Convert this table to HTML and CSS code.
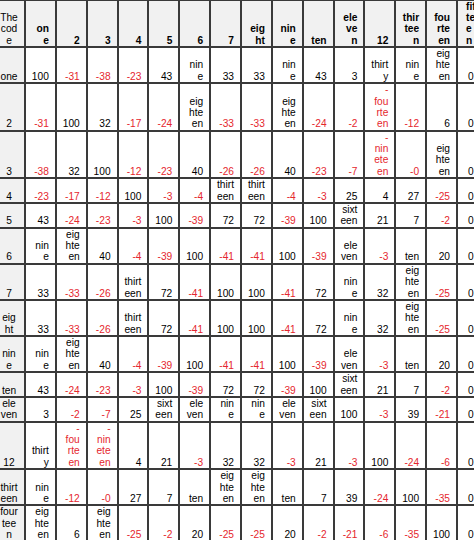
FILE: index.html
```html
<!DOCTYPE html>
<html>
<head>
<meta charset="utf-8">
<link rel="stylesheet" href="styles.css">
</head>
<body>
<div class="frame">
<table class="matrix">
<colgroup>
<col class="c-label">
<col class="c-data"><col class="c-data"><col class="c-data"><col class="c-data"><col class="c-data"><col class="c-data"><col class="c-data">
<col class="c-data"><col class="c-data"><col class="c-data"><col class="c-data"><col class="c-data"><col class="c-data"><col class="c-data">
<col class="c-last">
</colgroup>
<thead>
<tr>
<th class="label corner">The code</th>
<th>one</th><th>2</th><th>3</th><th>4</th><th>5</th><th>6</th><th>7</th>
<th>eight</th><th>nine</th><th>ten</th><th>eleven</th><th>12</th><th>thirteen</th><th>fourteen</th>
<th class="last">fifteen</th>
</tr>
</thead>
<tbody>
<tr><th class="label">one</th><td>100</td><td class="neg">-31</td><td class="neg">-38</td><td class="neg">-23</td><td>43</td><td>nine</td><td>33</td><td>33</td><td>nine</td><td>43</td><td>3</td><td>thirty</td><td>nine</td><td>eighteen</td><td class="last">0</td></tr>
<tr><th class="label">2</th><td class="neg">-31</td><td>100</td><td>32</td><td class="neg">-17</td><td class="neg">-24</td><td>eighteen</td><td class="neg">-33</td><td class="neg">-33</td><td>eighteen</td><td class="neg">-24</td><td class="neg">-2</td><td class="neg">-fourteen</td><td class="neg">-12</td><td>6</td><td class="last">0</td></tr>
<tr><th class="label">3</th><td class="neg">-38</td><td>32</td><td>100</td><td class="neg">-12</td><td class="neg">-23</td><td>40</td><td class="neg">-26</td><td class="neg">-26</td><td>40</td><td class="neg">-23</td><td class="neg">-7</td><td class="neg">-nineteen</td><td class="neg">-0</td><td>eighteen</td><td class="last">0</td></tr>
<tr><th class="label">4</th><td class="neg">-23</td><td class="neg">-17</td><td class="neg">-12</td><td>100</td><td class="neg">-3</td><td class="neg">-4</td><td>thirteen</td><td>thirteen</td><td class="neg">-4</td><td class="neg">-3</td><td>25</td><td>4</td><td>27</td><td class="neg">-25</td><td class="last">0</td></tr>
<tr><th class="label">5</th><td>43</td><td class="neg">-24</td><td class="neg">-23</td><td class="neg">-3</td><td>100</td><td class="neg">-39</td><td>72</td><td>72</td><td class="neg">-39</td><td>100</td><td>sixteen</td><td>21</td><td>7</td><td class="neg">-2</td><td class="last">0</td></tr>
<tr><th class="label">6</th><td>nine</td><td>eighteen</td><td>40</td><td class="neg">-4</td><td class="neg">-39</td><td>100</td><td class="neg">-41</td><td class="neg">-41</td><td>100</td><td class="neg">-39</td><td>eleven</td><td class="neg">-3</td><td>ten</td><td>20</td><td class="last">0</td></tr>
<tr><th class="label">7</th><td>33</td><td class="neg">-33</td><td class="neg">-26</td><td>thirteen</td><td>72</td><td class="neg">-41</td><td>100</td><td>100</td><td class="neg">-41</td><td>72</td><td>nine</td><td>32</td><td>eighteen</td><td class="neg">-25</td><td class="last">0</td></tr>
<tr><th class="label">eight</th><td>33</td><td class="neg">-33</td><td class="neg">-26</td><td>thirteen</td><td>72</td><td class="neg">-41</td><td>100</td><td>100</td><td class="neg">-41</td><td>72</td><td>nine</td><td>32</td><td>eighteen</td><td class="neg">-25</td><td class="last">0</td></tr>
<tr><th class="label">nine</th><td>nine</td><td>eighteen</td><td>40</td><td class="neg">-4</td><td class="neg">-39</td><td>100</td><td class="neg">-41</td><td class="neg">-41</td><td>100</td><td class="neg">-39</td><td>eleven</td><td class="neg">-3</td><td>ten</td><td>20</td><td class="last">0</td></tr>
<tr><th class="label">ten</th><td>43</td><td class="neg">-24</td><td class="neg">-23</td><td class="neg">-3</td><td>100</td><td class="neg">-39</td><td>72</td><td>72</td><td class="neg">-39</td><td>100</td><td>sixteen</td><td>21</td><td>7</td><td class="neg">-2</td><td class="last">0</td></tr>
<tr><th class="label">eleven</th><td>3</td><td class="neg">-2</td><td class="neg">-7</td><td>25</td><td>sixteen</td><td>eleven</td><td>nine</td><td>nine</td><td>eleven</td><td>sixteen</td><td>100</td><td class="neg">-3</td><td>39</td><td class="neg">-21</td><td class="last">0</td></tr>
<tr><th class="label">12</th><td>thirty</td><td class="neg">-fourteen</td><td class="neg">-nineteen</td><td>4</td><td>21</td><td class="neg">-3</td><td>32</td><td>32</td><td class="neg">-3</td><td>21</td><td class="neg">-3</td><td>100</td><td class="neg">-24</td><td class="neg">-6</td><td class="last">0</td></tr>
<tr><th class="label">thirteen</th><td>nine</td><td class="neg">-12</td><td class="neg">-0</td><td>27</td><td>7</td><td>ten</td><td>eighteen</td><td>eighteen</td><td>ten</td><td>7</td><td>39</td><td class="neg">-24</td><td>100</td><td class="neg">-35</td><td class="last">0</td></tr>
<tr><th class="label">fourteen</th><td>eighteen</td><td>6</td><td>eighteen</td><td class="neg">-25</td><td class="neg">-2</td><td>20</td><td class="neg">-25</td><td class="neg">-25</td><td>20</td><td class="neg">-2</td><td class="neg">-21</td><td class="neg">-6</td><td class="neg">-35</td><td>100</td><td class="last">0</td></tr>
</tbody>
</table>
</div>
</body>
</html>
```

FILE: styles.css
```css
html, body {
  margin: 0;
  padding: 0;
  background: #ffffff;
  overflow: hidden;
}

.frame {
  width: 100vw;
  height: 100vh;
  overflow: hidden;
}

.matrix {
  border-collapse: collapse;
  table-layout: fixed;
  width: 487.54px;
  margin: -1.5px 0 0 -7.5px;
  font-family: "Liberation Sans", Arial, sans-serif;
  font-size: 10.2px;
  line-height: 11.37px;
  color: #000000;
}

.c-label { width: 31.5px; }
.c-data { width: 30.86px; }
.c-last { width: 24px; }

.matrix th,
.matrix td {
  border: 2px solid #3a3a3a;
  padding: 0 6px 0 5.5px;
  vertical-align: bottom;
  text-align: right;
  overflow-wrap: anywhere;
}

.matrix thead th {
  background: #f1f1f1;
  font-weight: bold;
}

.matrix th.label {
  background: #f1f1f1;
  font-weight: normal;
  text-align: center;
}

.matrix .neg {
  color: #e5262d;
}

.matrix .last {
  text-align: left;
  padding: 0 3px 0 8px;
}

.matrix td.last {
  white-space: nowrap;
  padding-left: 10px;
}
```
